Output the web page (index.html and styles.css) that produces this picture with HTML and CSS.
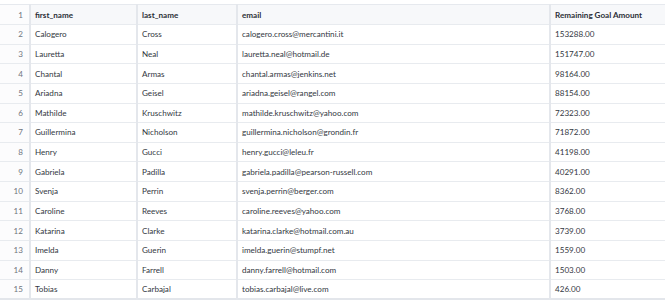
FILE: index.html
```html
<!DOCTYPE html>
<html>
<head>
<meta charset="utf-8">
<link rel="stylesheet" href="styles.css">
</head>
<body>
<div class="sheet">
<table class="grid">
<colgroup>
<col class="c-num"><col class="c-first"><col class="c-last"><col class="c-email"><col class="c-amt">
</colgroup>
<thead>
<tr class="head"><td class="num">1</td><td>first_name</td><td>last_name</td><td>email</td><td>Remaining Goal Amount</td></tr>
</thead>
<tbody>
<tr><td class="num">2</td><td>Calogero</td><td>Cross</td><td>calogero.cross@mercantini.it</td><td>153288.00</td></tr>
<tr><td class="num">3</td><td>Lauretta</td><td>Neal</td><td>lauretta.neal@hotmail.de</td><td>151747.00</td></tr>
<tr><td class="num">4</td><td>Chantal</td><td>Armas</td><td>chantal.armas@jenkins.net</td><td>98164.00</td></tr>
<tr><td class="num">5</td><td>Ariadna</td><td>Geisel</td><td>ariadna.geisel@rangel.com</td><td>88154.00</td></tr>
<tr><td class="num">6</td><td>Mathilde</td><td>Kruschwitz</td><td>mathilde.kruschwitz@yahoo.com</td><td>72323.00</td></tr>
<tr><td class="num">7</td><td>Guillermina</td><td>Nicholson</td><td>guillermina.nicholson@grondin.fr</td><td>71872.00</td></tr>
<tr><td class="num">8</td><td>Henry</td><td>Gucci</td><td>henry.gucci@leleu.fr</td><td>41198.00</td></tr>
<tr><td class="num">9</td><td>Gabriela</td><td>Padilla</td><td>gabriela.padilla@pearson-russell.com</td><td>40291.00</td></tr>
<tr><td class="num">10</td><td>Svenja</td><td>Perrin</td><td>svenja.perrin@berger.com</td><td>8362.00</td></tr>
<tr><td class="num">11</td><td>Caroline</td><td>Reeves</td><td>caroline.reeves@yahoo.com</td><td>3768.00</td></tr>
<tr><td class="num">12</td><td>Katarina</td><td>Clarke</td><td>katarina.clarke@hotmail.com.au</td><td>3739.00</td></tr>
<tr><td class="num">13</td><td>Imelda</td><td>Guerin</td><td>imelda.guerin@stumpf.net</td><td>1559.00</td></tr>
<tr><td class="num">14</td><td>Danny</td><td>Farrell</td><td>danny.farrell@hotmail.com</td><td>1503.00</td></tr>
<tr><td class="num">15</td><td>Tobias</td><td>Carbajal</td><td>tobias.carbajal@live.com</td><td>426.00</td></tr>
</tbody>
</table>
</div>
</body>
</html>
```

FILE: styles.css
```css
html, body {
  margin: 0;
  padding: 0;
  background: #ffffff;
}
.sheet {
  padding-top: 4px;
  width: 665px;
  overflow: hidden;
}
.grid {
  border-collapse: collapse;
  table-layout: fixed;
  width: 700px;
  font-family: Lato, "Open Sans", sans-serif;
  font-size: 8.1px;
  color: #333842;
  border-top: 1px solid #e6e9ee;
  border-bottom: 2px solid #e3e6eb;
}
.c-num { width: 30px; }
.c-first { width: 107px; }
.c-last { width: 100px; }
.c-email { width: 313px; }
.c-amt { width: 150px; }
.grid td {
  height: 19.64px;
  padding: 0 4px;
  box-sizing: border-box;
  border-bottom: 1px solid #e8ebef;
  border-left: 2px solid #e4e7ec;
  white-space: nowrap;
  overflow: hidden;
  vertical-align: middle;
}
.grid tbody tr:last-child td { border-bottom: none; }
.grid td.num {
  border-left: none;
  text-align: right;
  padding-right: 6px;
  color: #70757d;
  background: #fcfcfd;
}
.grid .head td {
  height: 20px;
  background: #f7f8fa;
  font-weight: 700;
  color: #2b2f36;
}
.grid .head td.num {
  font-weight: 400;
  color: #70757d;
  background: #fcfcfd;
}
```
